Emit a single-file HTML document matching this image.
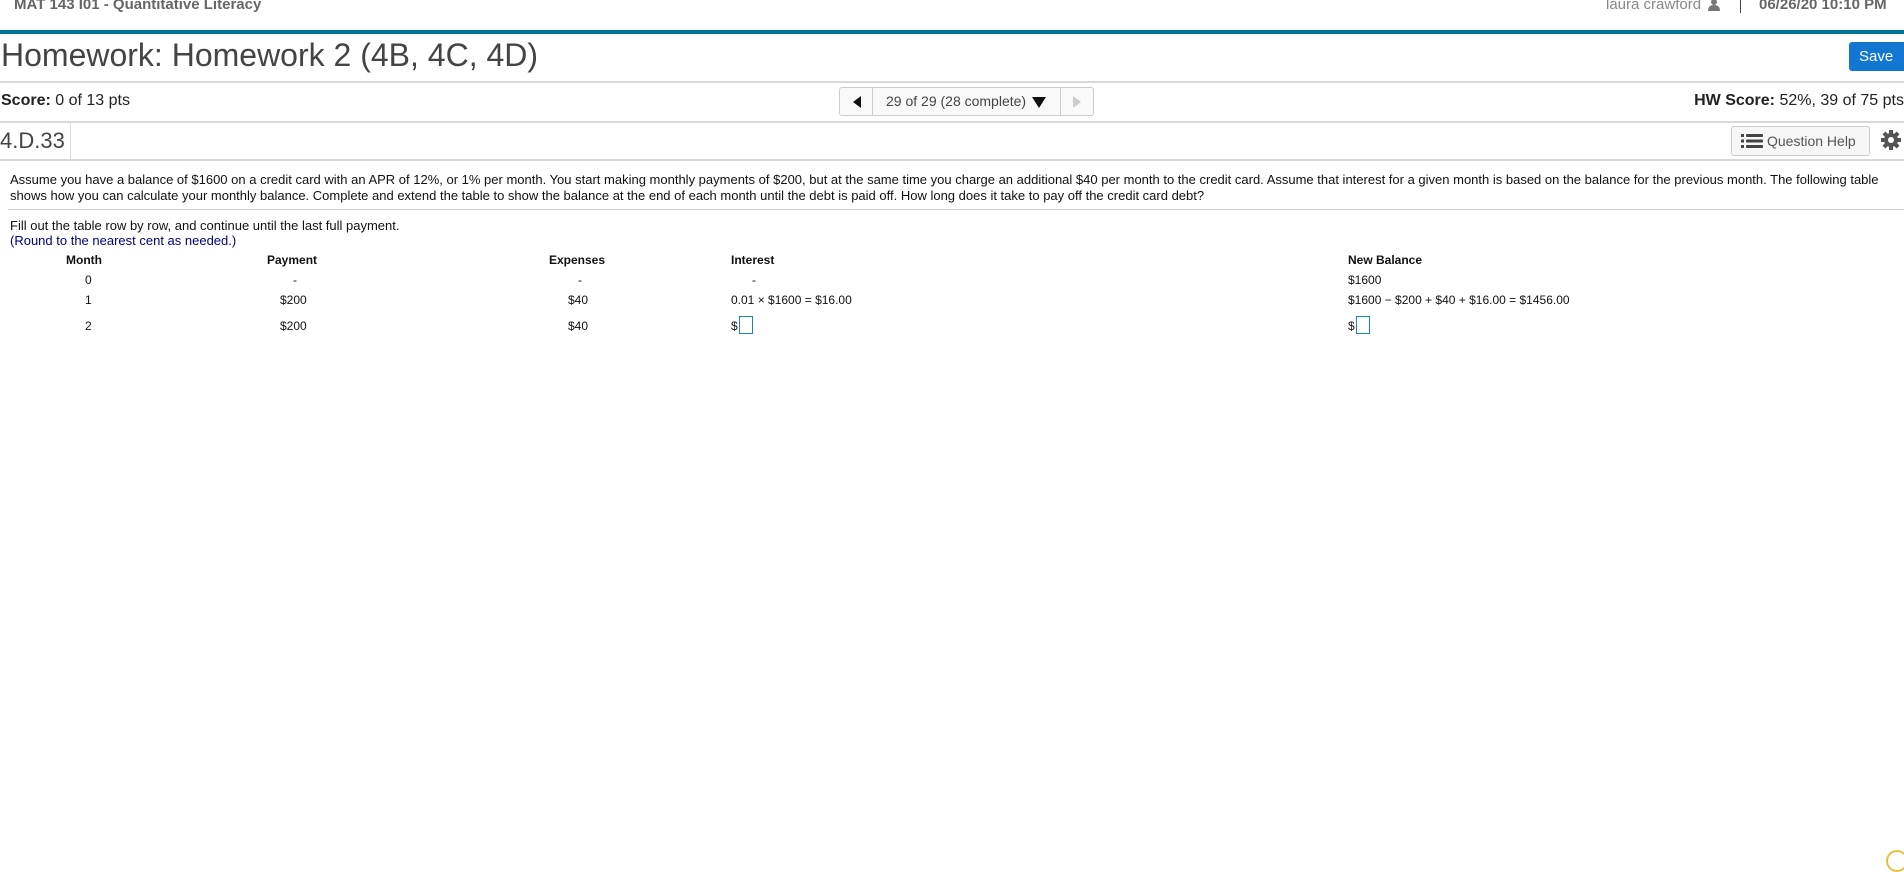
<!DOCTYPE html>
<html><head><meta charset="utf-8"><style>
body{margin:0;width:1904px;height:860px;overflow:hidden;background:#fff;font-family:"Liberation Sans",Arial,sans-serif;color:#000;position:relative}
.a{position:absolute;white-space:nowrap}
.hl{position:absolute;left:0;width:1904px;height:2px;background:#d6d9e0}
</style></head><body>
<div class="a" style="left:14px;top:-4px;font-size:15px;font-weight:bold;color:#666">MAT 143 I01 - Quantitative Literacy</div>
<div class="a" style="left:1606px;top:-4px;font-size:15px;color:#888">laura crawford</div>
<svg class="a" style="left:1708px;top:0" width="12" height="11"><circle cx="6" cy="2" r="3" fill="#777"/><path d="M0 11 Q0 5 6 5 Q12 5 12 11Z" fill="#777"/></svg>
<div class="a" style="left:1740px;top:0;width:1px;height:13px;background:#444"></div>
<div class="a" style="left:1759px;top:-4px;font-size:15px;font-weight:bold;color:#666">06/26/20 10:10 PM</div>
<div class="a" style="left:0;top:30px;width:1904px;height:4px;background:#007596"></div>
<div class="a" style="left:1px;top:37px;font-size:32px;color:#444">Homework: Homework 2 (4B, 4C, 4D)</div>
<div class="a" style="left:1849px;top:42px;width:60px;height:29px;background:#1177d1;border-radius:3px;color:#fff;font-size:15px;line-height:29px;padding-left:10px;box-sizing:border-box">Save</div>
<div class="hl" style="top:81px"></div>
<div class="a" style="left:1px;top:92px;font-size:16px;color:#222"><b>Score:</b> 0 of 13 pts</div>
<div class="a" style="left:839px;top:87px;width:255px;height:29px;border:1px solid #ccc;border-radius:3px;box-sizing:border-box;background:#f9f9f9"></div>
<div class="a" style="left:872px;top:87px;width:1px;height:29px;background:#ccc"></div>
<div class="a" style="left:1060px;top:87px;width:1px;height:29px;background:#ccc"></div>
<svg class="a" style="left:852px;top:96px" width="10" height="12"><path d="M9 0V12L1 6Z" fill="#111"/></svg>
<svg class="a" style="left:1072px;top:96px" width="10" height="12"><path d="M1 0V12L9 6Z" fill="#ccc"/></svg>
<div class="a" style="left:886px;top:93px;font-size:14px;color:#444">29 of 29 (28 complete)</div>
<svg class="a" style="left:1032px;top:97px" width="14" height="11"><path d="M0 0H14L7 11Z" fill="#111"/></svg>
<div class="a" style="right:0;top:92px;font-size:16px;color:#222"><b>HW Score:</b> 52%, 39 of 75 pts</div>
<div class="hl" style="top:121px"></div>
<div class="a" style="left:0;top:128px;font-size:22px;color:#444">4.D.33</div>
<div class="a" style="left:70px;top:123px;width:1px;height:36px;background:#ddd"></div>
<div class="a" style="left:1731px;top:126px;width:139px;height:30px;border:1px solid #ccc;border-radius:3px;box-sizing:border-box;background:#f7f7f7"></div>
<svg class="a" style="left:1741px;top:134px" width="22" height="14"><g fill="#444"><rect x="0" y="0" width="3" height="3"/><rect x="0" y="5.5" width="3" height="3"/><rect x="0" y="11" width="3" height="3"/><rect x="5" y="0" width="17" height="3" rx="1"/><rect x="5" y="5.5" width="17" height="3" rx="1"/><rect x="5" y="11" width="17" height="3" rx="1"/></g></svg>
<div class="a" style="left:1767px;top:133px;font-size:14px;color:#555">Question Help</div>
<svg class="a" style="left:1881px;top:130px" width="20" height="20" viewBox="0 0 20 20"><g fill="#555"><circle cx="10" cy="10" r="7"/><rect x="8" y="0" width="4" height="20"/><rect x="0" y="8" width="20" height="4"/><rect x="8" y="0" width="4" height="20" transform="rotate(45 10 10)"/><rect x="8" y="0" width="4" height="20" transform="rotate(-45 10 10)"/></g><circle cx="10" cy="10" r="3" fill="#fff"/></svg>
<div class="hl" style="top:159px"></div>
<div class="a" style="left:10px;top:172px;width:1888px;font-size:13px;line-height:16px;white-space:normal;color:#111">Assume you have a balance of $1600 on a credit card with an APR of 12%, or 1% per month. You start making monthly payments of $200, but at the same time you charge an additional $40 per month to the credit card. Assume that interest for a given month is based on the balance for the previous month. The following table shows how you can calculate your monthly balance. Complete and extend the table to show the balance at the end of each month until the debt is paid off. How long does it take to pay off the credit card debt?</div>
<div class="a" style="left:8px;top:209px;width:1896px;height:1px;background:#ccd"></div>
<div class="a" style="left:10px;top:218px;font-size:13px;color:#111">Fill out the table row by row, and continue until the last full payment.</div>
<div class="a" style="left:10px;top:233px;font-size:13px;color:#000080">(Round to the nearest cent as needed.)</div>
<div style="font-size:12px;color:#111">
<div class="a" style="left:66px;top:253px;font-weight:bold">Month</div>
<div class="a" style="left:267px;top:253px;font-weight:bold">Payment</div>
<div class="a" style="left:549px;top:253px;font-weight:bold">Expenses</div>
<div class="a" style="left:731px;top:253px;font-weight:bold">Interest</div>
<div class="a" style="left:1348px;top:253px;font-weight:bold">New Balance</div>
<div class="a" style="left:85px;top:273px">0</div>
<div class="a" style="left:293px;top:273px">-</div>
<div class="a" style="left:578px;top:273px">-</div>
<div class="a" style="left:752px;top:273px">-</div>
<div class="a" style="left:1348px;top:273px">$1600</div>
<div class="a" style="left:85px;top:293px">1</div>
<div class="a" style="left:280px;top:293px">$200</div>
<div class="a" style="left:568px;top:293px">$40</div>
<div class="a" style="left:731px;top:293px">0.01 × $1600 = $16.00</div>
<div class="a" style="left:1348px;top:293px">$1600 − $200 + $40 + $16.00 = $1456.00</div>
<div class="a" style="left:85px;top:319px">2</div>
<div class="a" style="left:280px;top:319px">$200</div>
<div class="a" style="left:568px;top:319px">$40</div>
<div class="a" style="left:731px;top:319px">$</div>
<div class="a" style="left:739px;top:316px;width:14px;height:18px;border:1px solid #1a8aa8;box-sizing:border-box"></div>
<div class="a" style="left:1348px;top:319px">$</div>
<div class="a" style="left:1356px;top:316px;width:14px;height:18px;border:1px solid #1a8aa8;box-sizing:border-box"></div>
</div>
<div class="a" style="left:1886px;top:850px;width:22px;height:22px;border-radius:50%;border:2px solid #e8c040;box-sizing:border-box"></div>
</body></html>
